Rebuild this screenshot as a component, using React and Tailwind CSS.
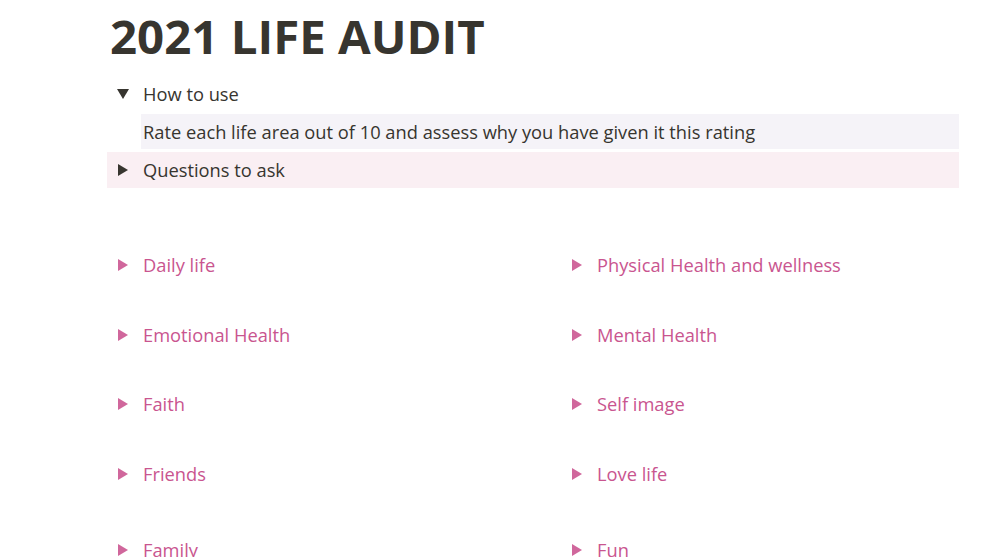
import React from "react";

const PINK = "text-[#c9558f]";

function Tri({ down = false, pink = false }) {
  return (
    <svg width="12" height="12" viewBox="0 0 12 12" className={pink ? "fill-[#d0679c]" : "fill-[#37352f]"}>
      {down ? <polygon points="0,1 12,1 6,11" /> : <polygon points="1,0 11,6 1,12" />}
    </svg>
  );
}

function Toggle({ label, pink = false, down = false, className = "" }) {
  return (
    <div className={`flex items-center h-[34px] ${className}`}>
      <div className="w-[36px] flex justify-start pl-[10px]">
        <Tri down={down} pink={pink} />
      </div>
      <span className={pink ? PINK : "text-[#37352f]"}>{label}</span>
    </div>
  );
}

export default function App() {
  const left = ["Daily life", "Emotional Health", "Faith", "Friends", "Family"];
  const right = ["Physical Health and wellness", "Mental Health", "Self image", "Love life", "Fun"];
  const gap = (i) => (i === 4 ? "mt-[42px]" : i === 0 ? "" : "mt-[35.5px]");
  return (
    <div
      className="w-[1005px] h-[557px] overflow-hidden bg-white pl-[107px] pr-[46px] text-[18.3px]"
      style={{ fontFamily: '"Open Sans", "Noto Sans", sans-serif' }}
    >
      <h1 className="pl-[3px] pt-[4px] h-[77px] text-[47.4px] font-bold leading-[64px] text-[#37352f]">
        2021 LIFE AUDIT
      </h1>
      <Toggle label="How to use" down />
      <div className="ml-[34px] mt-[3px] h-[35px] bg-[#f5f3f8] flex items-center pl-[2px] text-[#37352f]">
        Rate each life area out of 10 and assess why you have given it this rating
      </div>
      <div className="mt-[3px] bg-[#faeff3]">
        <Toggle label="Questions to ask" className="h-[36px]" />
      </div>
      <div className="mt-[60px] grid grid-cols-[454px_1fr]">
        <div className="flex flex-col">
          {left.map((l, i) => (
            <Toggle key={l} label={l} pink className={gap(i)} />
          ))}
        </div>
        <div className="flex flex-col">
          {right.map((l, i) => (
            <Toggle key={l} label={l} pink className={gap(i)} />
          ))}
        </div>
      </div>
    </div>
  );
}
